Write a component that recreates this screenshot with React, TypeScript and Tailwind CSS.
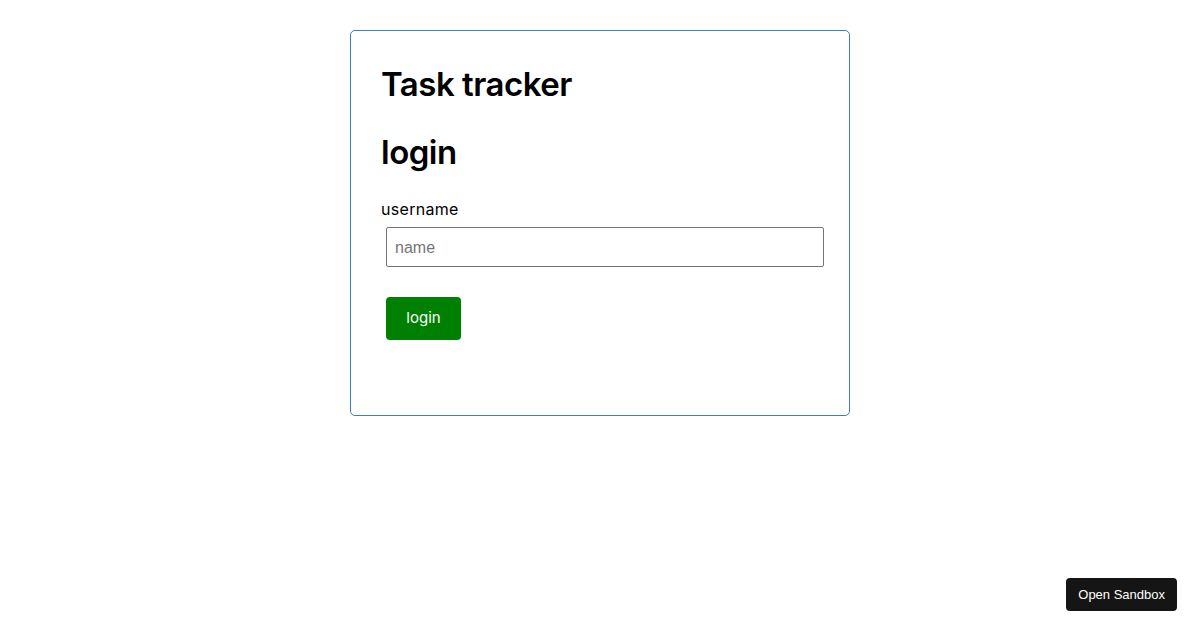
export default function App() {
  return (
    <div className="relative w-[1200px] h-[630px] bg-white" style={{ fontFamily: 'Inter, "Noto Sans", sans-serif' }}>
      <div className="flex justify-center pt-[30px]">
        <div className="w-[500px] h-[386px] border border-[#3a80c2] rounded-[5px] px-[30px] pt-[33px]">
          <h1 className="text-[33px] font-semibold leading-[40px] tracking-[-0.5px] text-black">Task tracker</h1>
          <h2 className="mt-[28px] text-[33px] font-semibold leading-[40px] tracking-[-0.5px] text-black">login</h2>
          <form className="mt-[27px]" onSubmit={(e) => e.preventDefault()}>
            <label className="block text-[16px] leading-[20px] tracking-[0.3px] text-black">username</label>
            <input
              type="text"
              placeholder="name"
              className="mt-[8px] ml-[5px] block w-[438px] h-[40px] border border-[#767676] rounded-[2px] px-[8px] pt-[2px] text-[16px] placeholder:text-[#757575] outline-none"
              style={{ fontFamily: '"Liberation Sans", Arial, sans-serif' }}
            />
            <button
              type="submit"
              className="mt-[30px] ml-[5px] w-[75px] h-[43px] rounded-[4px] bg-[#008000] text-white text-[15px]"
            >
              login
            </button>
          </form>
        </div>
      </div>
      <div
        className="absolute right-[23px] bottom-[19px] h-[33px] px-[12px] flex items-center rounded-[4px] bg-[#151515] text-white text-[13px]"
        style={{ fontFamily: '"Liberation Sans", Arial, sans-serif' }}
      >
        Open Sandbox
      </div>
    </div>
  );
}
